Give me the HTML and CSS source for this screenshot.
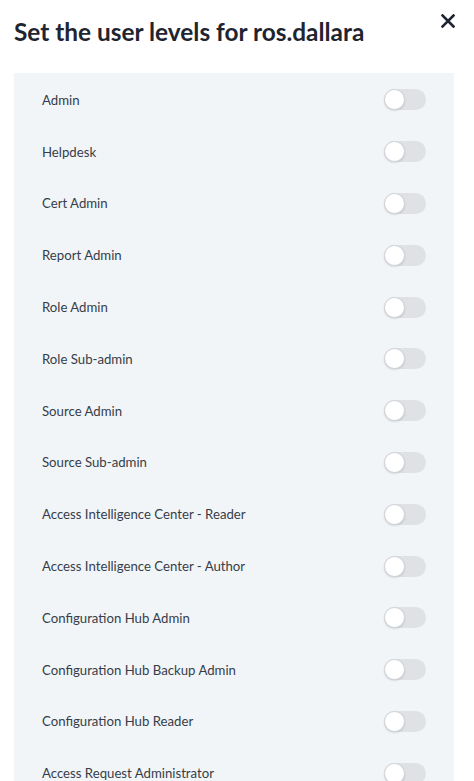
FILE: index.html
```html
<!DOCTYPE html>
<html>
<head>
<meta charset="utf-8">
<link rel="stylesheet" href="styles.css">
</head>
<body>
<div class="dialog">
  <div class="header">
    <h1 class="title">Set the user levels for ros.dallara</h1>
    <button class="close" aria-label="Close">
      <svg width="14" height="14" viewBox="0 0 14 14"><path d="M1.5 1.5 L12.5 12.5 M12.5 1.5 L1.5 12.5" stroke="#1f2530" stroke-width="2.6" stroke-linecap="square"/></svg>
    </button>
  </div>
  <div class="panel">
    <div class="row"><span class="label">Admin</span><span class="toggle"><span class="knob"></span></span></div>
    <div class="row"><span class="label">Helpdesk</span><span class="toggle"><span class="knob"></span></span></div>
    <div class="row"><span class="label">Cert Admin</span><span class="toggle"><span class="knob"></span></span></div>
    <div class="row"><span class="label">Report Admin</span><span class="toggle"><span class="knob"></span></span></div>
    <div class="row"><span class="label">Role Admin</span><span class="toggle"><span class="knob"></span></span></div>
    <div class="row"><span class="label">Role Sub-admin</span><span class="toggle"><span class="knob"></span></span></div>
    <div class="row"><span class="label">Source Admin</span><span class="toggle"><span class="knob"></span></span></div>
    <div class="row"><span class="label">Source Sub-admin</span><span class="toggle"><span class="knob"></span></span></div>
    <div class="row"><span class="label">Access Intelligence Center - Reader</span><span class="toggle"><span class="knob"></span></span></div>
    <div class="row"><span class="label">Access Intelligence Center - Author</span><span class="toggle"><span class="knob"></span></span></div>
    <div class="row"><span class="label">Configuration Hub Admin</span><span class="toggle"><span class="knob"></span></span></div>
    <div class="row"><span class="label">Configuration Hub Backup Admin</span><span class="toggle"><span class="knob"></span></span></div>
    <div class="row"><span class="label">Configuration Hub Reader</span><span class="toggle"><span class="knob"></span></span></div>
    <div class="row"><span class="label">Access Request Administrator</span><span class="toggle"><span class="knob"></span></span></div>
  </div>
</div>
</body>
</html>
```
FILE: styles.css
```css
html, body {
  margin: 0;
  padding: 0;
  background: #ffffff;
  overflow: hidden;
}
body {
  font-family: "Lato", "Open Sans", sans-serif;
  color: #363d48;
}
.dialog {
  width: 474px;
  height: 781px;
  overflow: hidden;
}
.header {
  display: flex;
  justify-content: space-between;
  align-items: flex-start;
  padding: 16px 19px 0 14px;
  height: 55px;
  box-sizing: border-box;
}
.title {
  margin: 0;
  font-size: 24.4px;
  font-weight: 700;
  color: #1f2530;
  line-height: 31px;
  letter-spacing: 0;
}
.close {
  border: none;
  background: none;
  padding: 0;
  margin-top: -2px;
  width: 14px;
  height: 14px;
  display: flex;
}
.panel {
  margin: 18px 20px 0 14px;
  background: #f2f5f8;
  padding: 1px 28px 0 28px;
  height: 760px;
}
.row {
  display: flex;
  justify-content: space-between;
  align-items: center;
  height: 51.8px;
}
.label {
  font-size: 13.2px;
}
.toggle {
  width: 42px;
  height: 21px;
  border-radius: 11px;
  background: #dfe1e5;
  position: relative;
  display: block;
}
.knob {
  position: absolute;
  left: 0;
  top: 0;
  width: 21px;
  height: 21px;
  border-radius: 50%;
  background: #ffffff;
  box-sizing: border-box;
  border: 1px solid #d0d3d8;
  box-shadow: 0 1px 2px rgba(0,0,0,0.12);
}
```
